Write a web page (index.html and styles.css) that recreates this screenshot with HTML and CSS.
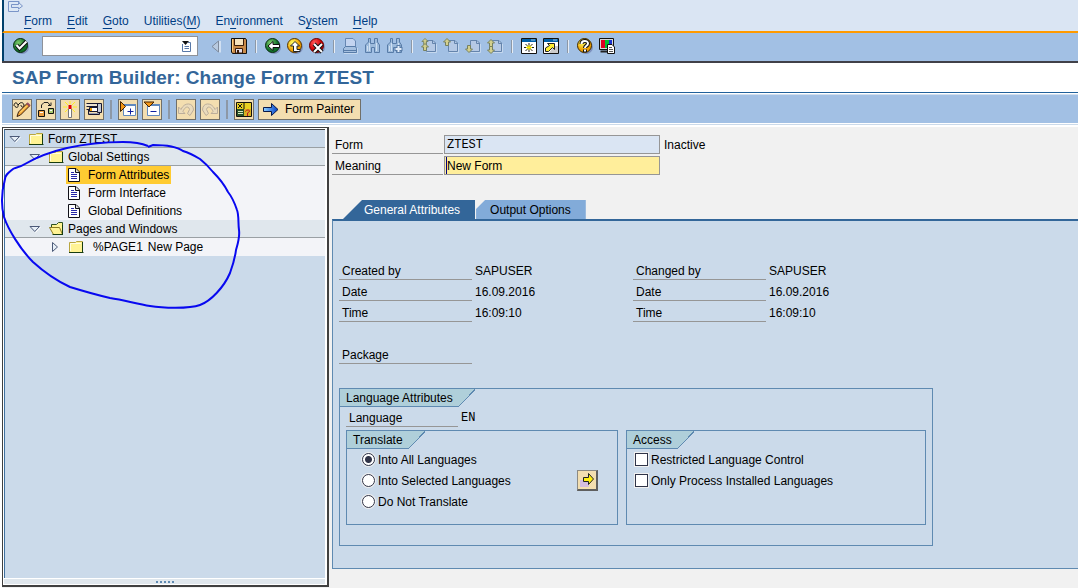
FILE: index.html
```html
<!DOCTYPE html>
<html lang="en">
<head>
    <meta charset="utf-8">
    <title>SAP Form Builder: Change Form ZTEST</title>
    <link rel="stylesheet" href="styles.css">
</head>
<body>
    <!-- shared icon shapes -->
    <svg class="defs" width="0" height="0">
        <defs>
            <radialGradient id="green" cx="35%" cy="30%"><stop offset="0" stop-color="#7ecb6a"/><stop offset="1" stop-color="#11702a"/></radialGradient>
            <radialGradient id="yellow" cx="35%" cy="30%"><stop offset="0" stop-color="#ffff66"/><stop offset="1" stop-color="#f0a000"/></radialGradient>
            <radialGradient id="red" cx="35%" cy="30%"><stop offset="0" stop-color="#ff5a5a"/><stop offset="1" stop-color="#d00000"/></radialGradient>
            <linearGradient id="blue"><stop offset="0" stop-color="#8fd0ff"/><stop offset="1" stop-color="#0040c8"/></linearGradient>
        </defs>
        <symbol id="folder" viewBox="0 0 16 14">
            <path d="M.500 12.500V2.500H6.500L7.500 1.500H13.500V12.500Z" fill="#fff394" stroke="#b8a540"/>
            <path d="M0 12.500H14.500M13.500 2V13" stroke="#173c10" fill="none"/>
            <path d="M1.500 11V3.500H12" stroke="#fffde0" fill="none"/>
        </symbol>
        <symbol id="folder-open" viewBox="0 0 16 14">
            <path d="M2.500 5V2.500H7.500L9.500.500H13.500V12.500H3.500" fill="#fff394" stroke="#2d5020"/>
            <path d="M.500 5.500H10.500L13.500 12.500H4.500Z" fill="#fff394" stroke="#8c7c20"/>
            <path d="M4 12.500H14M13.500 3V13" stroke="#173c10" fill="none"/>
        </symbol>
        <symbol id="doc" viewBox="0 0 12 14">
            <path d="M.500.500H8L11.500 4V13.500H.500Z" fill="#fff" stroke="#101018"/>
            <path d="M7.500 1V4.500H11" fill="#ddd" stroke="#101018"/>
            <path d="M3 4.500H6M3 6.500H9M3 8.500H9M3 10.500H9" stroke="#2828a8"/>
        </symbol>
        <symbol id="down" viewBox="0 0 12 8">
            <path d="M1 1.500H10.500L5.800 6.500Z" fill="#e8f0f8" stroke="#4c5a78"/>
            <path d="M6.500 7.500L11.500 2" stroke="#fff"/>
        </symbol>
        <symbol id="page" viewBox="0 0 16 16">
            <path d="M5.500 2.500H12L14.500 5V13.500H5.500Z" fill="#b5c9e5" stroke="#6484ac"/>
            <path d="M11.500 3V5.500H14" fill="none" stroke="#6484ac"/>
            <path d="M6 14.500H15.500V6" fill="none" stroke="#c5d8ee"/>
        </symbol>
        <symbol id="arrow-up" viewBox="0 0 8 8">
            <path d="M4 .500L7.500 4H5.500V7.500H2.500V4H.500Z" fill="#d3cf8c" stroke="#77815f"/>
        </symbol>
        <symbol id="binoculars" viewBox="0 0 16 16">
            <path d="M3.500 .500H5.500V5.500H9.500V.500H12.500V4L14.500 7V14.500H9.500V9.500H6.500V14.500H.500V7L3.500 4Z" fill="#9dbbdc" stroke="#587ca8"/>
            <path d="M4.500 5V13M2.500 8V13M11.500 5V13" stroke="#cfe0f2"/>
        </symbol>
    </svg>

    <header class="window-head">
        <svg class="window-icon" width="16" height="11" viewBox="0 0 16 11"><path d="M11 2.500V.500H.500V10.500H10.500V9M3.500 3.500H10.500V1.500L14.500 5L10.500 8V6.500H3.500Z" fill="#dde8f5" stroke="#7a95c8"/></svg>
        <nav class="menu">
            <a href="#"><u>F</u>orm</a>
            <a href="#"><u>E</u>dit</a>
            <a href="#"><u>G</u>oto</a>
            <a href="#">Utilities(<u>M</u>)</a>
            <a href="#">En<u>v</u>ironment</a>
            <a href="#">S<u>y</u>stem</a>
            <a href="#"><u>H</u>elp</a>
        </nav>
    </header>

    <div class="toolbar">
        <button class="icon enter" aria-label="Enter"><svg width="16" height="16" viewBox="0 0 16 16"><circle cx="9" cy="9" r="7" fill="#7d91bd"/><circle cx="7.500" cy="7.500" r="7" fill="url(#green)" stroke="#0a2c10"/><path d="M3.500 7L6.500 10.500L13.500 3.500" stroke="#111" stroke-width="4" fill="none"/><path d="M3.500 7L6.500 10.500L13.500 3.500" stroke="#fff" stroke-width="2" fill="none"/></svg></button>
        <div class="command">
            <input type="text" aria-label="Command">
            <button class="icon" aria-label="Command list"><svg width="10" height="11" viewBox="0 0 10 11"><path d="M.500 3V10.500H8.500V1.500H6" fill="none" stroke="#5878a8"/><path d="M2.500 5.500H7M2.500 7.500H7" stroke="#5878a8"/><path d="M0 0H7L3.500 4Z" fill="#111"/></svg></button>
        </div>
        <button class="icon collapse" aria-label="Hide command field"><svg width="10" height="13" viewBox="0 0 10 13"><path d="M7.500 1V12L1 6.500Z" fill="#b8cae0" stroke="#7e8a9c"/><path d="M9 1V12.500" stroke="#fff"/></svg></button>
        <button class="icon" aria-label="Save"><svg width="16" height="16" viewBox="0 0 16 16"><path d="M.500.500H14.500L15.500 2V15.500H1.500L.500 14Z" fill="#c98a48" stroke="#111"/><path d="M1.500 1V13.500" stroke="#ffd080"/><path d="M4 1H12V7H4Z" fill="#f7e3bd"/><path d="M3.500 1V7.500H12.500V1" fill="none" stroke="#3a1c08"/><path d="M4.500 15V10.500H11.500V15Z" fill="#e4dce9" stroke="#3a1c08"/><path d="M6 12H8V15H6Z" fill="#3a1c08"/></svg></button>
        <span class="sep"></span>
        <button class="icon" aria-label="Back"><svg width="16" height="16" viewBox="0 0 16 16"><circle cx="9" cy="9" r="7" fill="#7d91bd"/><circle cx="7.500" cy="7.500" r="7" fill="url(#green)" stroke="#0a2c10"/><path d="M3 8L8 3.500V6.500H14.500V9.500H8V12.500Z" fill="#fff" stroke="#111"/></svg></button>
        <button class="icon" aria-label="Exit"><svg width="16" height="16" viewBox="0 0 16 16"><circle cx="9" cy="9" r="7" fill="#7d91bd"/><circle cx="7.500" cy="7.500" r="7" fill="url(#yellow)" stroke="#553300"/><path d="M8 3.500L12.500 8H10V11.500H13V13.500H6.500V8H3.500Z" fill="#fff" stroke="#222"/></svg></button>
        <button class="icon" aria-label="Cancel"><svg width="16" height="16" viewBox="0 0 16 16"><circle cx="9" cy="9" r="7" fill="#7d91bd"/><circle cx="7.500" cy="7.500" r="7" fill="url(#red)" stroke="#600"/><path d="M5 6L13 14M13 6L5 14" stroke="#111" stroke-width="4"/><path d="M5 6L13 14M13 6L5 14" stroke="#fff" stroke-width="2"/></svg></button>
        <span class="sep"></span>
        <button class="icon" aria-label="Print" disabled><svg width="16" height="16" viewBox="0 0 16 16"><path d="M2.500 9V.500H10L12.500 3V9" fill="#c3d4f0" stroke="#6787b2"/><path d="M.500 10.500L2.500 8.500H12.500L13.500 10.500V14.500H.500Z" fill="#a5c0e0" stroke="#587ca8"/><path d="M1 12.500H13" stroke="#587ca8"/><path d="M1 15.500H14.500V10" fill="none" stroke="#c5d8ee"/></svg></button>
        <button class="icon" aria-label="Find" disabled><svg width="16" height="16"><use href="#binoculars"/></svg></button>
        <button class="icon" aria-label="Find next" disabled><svg width="16" height="16" viewBox="0 0 16 16"><use href="#binoculars" width="16" height="16"/><path d="M11.500 7V15M7.500 11H15.500" stroke="#587ca8" stroke-width="4"/><path d="M11.500 8V14M8.500 11H14.500" stroke="#e2ecf8" stroke-width="2"/></svg></button>
        <span class="sep"></span>
        <button class="icon" aria-label="First page" disabled><svg width="16" height="16" viewBox="0 0 16 16"><use href="#page" width="16" height="16"/><use href="#arrow-up" width="8" height="7"/><use href="#arrow-up" y="5" width="8" height="8"/></svg></button>
        <button class="icon" aria-label="Previous page" disabled><svg width="16" height="16" viewBox="0 0 16 16"><use href="#page" width="16" height="16"/><use href="#arrow-up" width="8" height="8"/></svg></button>
        <button class="icon" aria-label="Next page" disabled><svg width="16" height="16" viewBox="0 0 16 16"><use href="#page" width="16" height="16"/><use href="#arrow-up" transform="translate(0 15) scale(1 -1)" width="8" height="8"/></svg></button>
        <button class="icon" aria-label="Last page" disabled><svg width="16" height="16" viewBox="0 0 16 16"><use href="#page" width="16" height="16"/><use href="#arrow-up" y="1" width="8" height="8"/><use href="#arrow-up" transform="translate(0 16) scale(1 -1)" width="8" height="8"/></svg></button>
        <span class="sep"></span>
        <button class="icon" aria-label="New session"><svg width="16" height="16" viewBox="0 0 16 16"><path d="M.500.500H15.500V15.500H.500Z" fill="#fff" stroke="#111"/><path d="M1 1H15V4H1Z" fill="#0060a8"/><path d="M10 2H14" stroke="#9cc8e8"/><path d="M8 5V14M3 9.500H13M4.500 6L11.500 13M11.500 6L4.500 13" stroke="#222"/><path d="M8 7V12M5 9.500H11M6 7.500L10 11.500M10 7.500L6 11.500" stroke="#ffee00"/></svg></button>
        <button class="icon" aria-label="Create shortcut"><svg width="16" height="16" viewBox="0 0 16 16"><path d="M.500.500H15.500V15.500H.500Z" fill="#fff" stroke="#111"/><path d="M1 1H15V4H1Z" fill="#0060a8"/><path d="M10 2H14" stroke="#9cc8e8"/><path d="M11 8H15V15H6Z" fill="#ccc"/><path d="M2.500 13.500V10L6.500 7.500L4.500 5.500H11.500V11.500L9.500 9.500L5.500 13.500Z" fill="#ffee33" stroke="#222"/></svg></button>
        <span class="sep"></span>
        <button class="icon" aria-label="Help"><svg width="16" height="16" viewBox="0 0 16 16"><circle cx="9" cy="9" r="7" fill="#7d91bd"/><circle cx="7.500" cy="7.500" r="7" fill="url(#yellow)" stroke="#3c2800"/><path d="M4.500 6C4.500 2 11 2 11 5.500C11 8 8 7.500 8 10M8 11.500V14" fill="none" stroke="#111" stroke-width="4"/><path d="M4.500 6C4.500 2 11 2 11 5.500C11 8 8 7.500 8 10M8 11.500V13.500" fill="none" stroke="#fff" stroke-width="2"/></svg></button>
        <button class="icon" aria-label="Customize layout"><svg width="16" height="16" viewBox="0 0 16 16"><path d="M.500.500H14.500V11.500H.500Z" fill="#d8d8d8" stroke="#111"/><path d="M2 2H6V10H2Z" fill="#e00020"/><path d="M6 2H10V10H6Z" fill="#00c030"/><path d="M10 2H13V10H10Z" fill="#1830d0"/><path d="M1.500 13.500H8" stroke="#222" stroke-width="2"/><path d="M8.500 6.500H13L15.500 9V15.500H8.500Z" fill="#fff" stroke="#111"/><path d="M10 9.500H13M10 11.500H14M10 13.500H14" stroke="#555"/></svg></button>
    </div>

    <h1 class="title">SAP Form Builder: Change Form ZTEST</h1>

    <div class="app-toolbar">
        <button aria-label="Display / change"><svg width="18" height="17" viewBox="0 0 18 17"><path d="M1 5C1 1 4 1 5 4S2 7 2 5M5 4L7 2C9 1 11 2 11 5C10 7 8 6 8 4" fill="none" stroke="#111"/><path d="M14 2.500L16.500 5L7.500 14L4 15.500L5.500 11Z" fill="#f5a838" stroke="#3c2010"/><path d="M13.500 5L7 11.500" stroke="#ffe890"/><path d="M14 2L17 5" stroke="#9a4a60" stroke-width="2"/></svg></button>
        <button aria-label="Other object"><svg width="18" height="17" viewBox="0 0 18 17"><path d="M4.500 7V4L7 1.500H11L13.500 5M11 4.500H14V1.500" fill="none" stroke="#222"/><path d="M1.500 9.500H7.500V15.500H1.500Z" fill="#f0a040" stroke="#111"/><path d="M11.500 7.500H16.500V12.500H11.500Z" fill="#a8c870" stroke="#111"/><path d="M3 11.500H6M13 9.500H15" stroke="#fff"/></svg></button>
        <button aria-label="Activate"><svg width="18" height="17" viewBox="0 0 18 17"><path d="M9 0V3M4 1L7 4M14 1L11 4M2 6H6M12 6H16M4 11L7 8M14 11L11 8" stroke="#ffee20"/><path d="M7.500 4H10.500V8H7.500Z" fill="#e00000"/><path d="M8 8H10V16H8Z" fill="#fff"/><path d="M7.500 8V16.500H10.500V8" fill="none" stroke="#77777a"/></svg></button>
        <button aria-label="Test"><svg width="18" height="17" viewBox="0 0 18 17"><path d="M1.500 2.500H16.500V11.500H12.500V2.500M1.500 5.500H12" fill="#c5cad5" stroke="#181830"/><path d="M1 4H12" stroke="#e8e8f0"/><path d="M4.500 6.500H12.500V10.500H4.500Z" fill="#fff" stroke="#181830"/><path d="M5 7H7V10H5Z" fill="#f4a000"/><path d="M1.500 8.500H4.500M3.500 9V13.500H14.500V11.500" fill="none" stroke="#181830"/><path d="M4 12.500H14" stroke="#9aa0b0"/></svg></button>
        <span class="sep"></span>
        <button aria-label="Expand subtree"><svg width="18" height="17" viewBox="0 0 18 17"><path d="M4.500 3.500H16.500V14.500H4.500Z" fill="#fff" stroke="#6089be"/><path d="M4 4H17" stroke="#6089be" stroke-width="2"/><path d="M8.500 10.500H14.500M11.500 7.500V13.500" stroke="#1020a0"/><path d="M1.500.500V10.500L6.500 5.500Z" fill="#f49818" stroke="#442200"/></svg></button>
        <button aria-label="Collapse subtree"><svg width="18" height="17" viewBox="0 0 18 17"><path d="M4.500 3.500H16.500V14.500H4.500Z" fill="#fff" stroke="#6089be"/><path d="M4 4H17" stroke="#6089be" stroke-width="2"/><path d="M7.500 10.500H13.500" stroke="#1020a0"/><path d="M1 1H11L6 6Z" fill="#f49818" stroke="#442200"/></svg></button>
        <span class="sep"></span>
        <button aria-label="Undo" disabled><svg width="18" height="17" viewBox="0 0 18 17"><path d="M1.500 6V12.500H8L6 10.500C8 5 12 5 12.500 8.500L10.500 12.500L13 14.500L16.500 9C16.500 1 7 1 4 8.500Z" fill="#eadbbc" stroke="#bcae9b"/></svg></button>
        <button aria-label="Redo" disabled><svg width="18" height="17" viewBox="0 0 18 17"><path d="M16.500 6V12.500H10L12 10.500C10 5 6 5 5.500 8.500L7.500 12.500L5 14.500L1.500 9C1.500 1 11 1 14 8.500Z" fill="#eadbbc" stroke="#bcae9b"/></svg></button>
        <span class="sep"></span>
        <button aria-label="Field list"><svg width="18" height="17" viewBox="0 0 18 17"><path d="M1.500 1.500H16.500V15.500H1.500Z" fill="#e8d020" stroke="#111"/><path d="M2 8H9V15H2Z" fill="#285028"/><path d="M9 8H16V15H9Z" fill="#d8b020"/><path d="M3 3L7 7M7 3L3 7M9 2V8" stroke="#111"/><path d="M3 10.500H8M3 12.500H8" stroke="#d8e8c0"/><path d="M10.500 10.500C11 8.500 15 8.500 14.500 10.500L12.500 12V15" fill="none" stroke="#c01020"/></svg></button>
        <button class="painter"><svg width="16" height="15" viewBox="0 0 16 15"><path d="M.500 5.500H8.500V1.500L15 7.500L8.500 13.500V9.500H.500Z" fill="url(#blue)" stroke="#081848"/></svg>Form Painter</button>
    </div>

    <main class="workspace">
        <aside class="tree-panel">
            <div class="tree">
                <div class="row root"><button class="icon" aria-label="Collapse"><svg width="12" height="8"><use href="#down"/></svg></button><svg width="16" height="14"><use href="#folder"/></svg><span>Form ZTEST</span></div>
                <div class="row group"><button class="icon" aria-label="Collapse"><svg width="12" height="8"><use href="#down"/></svg></button><svg width="16" height="14"><use href="#folder"/></svg><span>Global Settings</span></div>
                <div class="row leaf"><a href="#" class="selected"><svg width="12" height="14"><use href="#doc"/></svg>Form Attributes</a></div>
                <div class="row leaf"><a href="#"><svg width="12" height="14"><use href="#doc"/></svg>Form Interface</a></div>
                <div class="row leaf"><a href="#"><svg width="12" height="14"><use href="#doc"/></svg>Global Definitions</a></div>
                <div class="row group"><button class="icon" aria-label="Collapse"><svg width="12" height="8"><use href="#down"/></svg></button><svg width="16" height="14"><use href="#folder-open"/></svg><span>Pages and Windows</span></div>
                <div class="row page"><button class="icon" aria-label="Expand"><svg width="12" height="10" viewBox="0 0 12 10"><path d="M3.500.500V9.500L8.500 5Z" fill="#e8f0f8" stroke="#4c5a78"/></svg></button><svg width="16" height="14"><use href="#folder"/></svg><span class="name">%PAGE1</span><span>New Page</span></div>
            </div>
            <div class="grip"><i></i><i></i><i></i><i></i><i></i></div>
            <!-- hand-drawn marker -->
            <svg class="marker" width="244" height="172" viewBox="0 138 244 172"><path d="M148 146C141 143 133 142 123 142C105 142 85 144 67 148C50 152 35 158 25 164C19 168 13 168 13 169C8 173 5 175 5 179C2 190 1 205 4 217C8 229 20 249 33 262C44 272 57 281 70 287C83 291 97 295 110 298C124 300 137 304 150 306C162 308 189 309 200 305C211 301 224 287 230 273C234 262 235 258 236 250C238 243 240 237 239 230C238 223 239 215 237 210C235 204 232 197 228 192C224 184 218 177 213 172C209 167 205 163 200 159C195 156 190 153 183 151C176 146 166 145 153 145L148 147" fill="none" stroke="#0808f0" stroke-width="2"/></svg>
        </aside>

        <section class="detail">
            <div class="form-head">
                <label for="formName">Form</label>
                <input id="formName" class="mono" type="text" value="ZTEST" readonly>
                <span>Inactive</span>
                <label for="meaning">Meaning</label>
                <input id="meaning" class="active" type="text" value="New Form">
            </div>

            <div class="tabs">
                <button class="tab current">General Attributes</button>
                <button class="tab">Output Options</button>
            </div>

            <div class="panel">
                <div class="info">
                    <dl>
                        <dt>Created by</dt><dd>SAPUSER</dd>
                        <dt>Date</dt><dd>16.09.2016</dd>
                        <dt>Time</dt><dd>16:09:10</dd>
                    </dl>
                    <dl>
                        <dt>Changed by</dt><dd>SAPUSER</dd>
                        <dt>Date</dt><dd>16.09.2016</dd>
                        <dt>Time</dt><dd>16:09:10</dd>
                    </dl>
                    <dl class="package">
                        <dt>Package</dt><dd></dd>
                    </dl>
                </div>

                <fieldset class="language">
                    <legend>Language Attributes</legend>
                    <dl class="lang-row">
                        <dt>Language</dt><dd class="mono">EN</dd>
                    </dl>
                    <div class="groups">
                        <fieldset>
                            <legend>Translate</legend>
                            <div class="translate">
                                <div>
                                    <label><input type="radio" name="translate" checked>Into All Languages</label>
                                    <label><input type="radio" name="translate">Into Selected Languages</label>
                                    <label><input type="radio" name="translate">Do Not Translate</label>
                                </div>
                                <button class="select-languages" aria-label="Select languages"><svg width="16" height="16" viewBox="0 0 16 16"><path d="M1 8H10V15H1Z" fill="#d4bde0"/><path d="M4.500 5.500H9.500V1.500L14.500 7L9.500 12.500V9.500H4.500Z" fill="#ffee10" stroke="#222"/></svg></button>
                            </div>
                        </fieldset>
                        <fieldset>
                            <legend>Access</legend>
                            <div class="access">
                                <label><input type="checkbox">Restricted Language Control</label>
                                <label><input type="checkbox">Only Process Installed Languages</label>
                            </div>
                        </fieldset>
                    </div>
                </fieldset>
            </div>
        </section>
    </main>
</body>
</html>
```

FILE: styles.css
```css
* {
    box-sizing: border-box;
}
body {
    margin: 0;
    min-height: 100vh;
    display: flex;
    flex-direction: column;
    padding-left: 2px;
    background: #fff;
    color: #000;
    font-family: "Liberation Sans", Arial, sans-serif;
    font-size: 12px;
    line-height: 18px;
}
button, input {
    font: inherit;
    color: inherit;
}
button {
    padding: 0;
    border: none;
    background: none;
}
a {
    color: inherit;
    text-decoration: none;
}
svg {
    display: block;
    flex: none;
}
.defs {
    position: absolute;
}
.mono {
    font-family: "Liberation Mono", monospace;
}

/* menu and toolbars */
.window-head {
    height: 33px;
    padding: 1px 4px 0;
    background: #dae5f3;
    border-left: 2px solid #00406c;
    border-bottom: 2px solid #ff9a00;
}
.menu {
    display: flex;
    gap: 15px;
    padding-left: 16px;
    color: #003d84;
}
.menu u {
    text-underline-offset: 3px;
}
.toolbar {
    display: flex;
    align-items: center;
    gap: 6px;
    height: 28px;
    padding: 0 9px 2px;
    background: #a2c0e4;
    border-left: 2px solid #00406c;
}
.icon {
    display: flex;
    align-items: center;
    justify-content: center;
}
.sep {
    width: 2px;
    height: 13px;
    margin: 0 2px;
    background: #8d98a6;
    border-right: 1px solid #e6edf6;
}
.command {
    display: flex;
    align-items: center;
    width: 156px;
    height: 20px;
    margin-left: 7px;
    padding-right: 5px;
    background: #fff;
    border: 1px solid #8e9299;
}
.command input {
    flex: 1;
    min-width: 0;
    border: none;
    background: none;
    outline: none;
}
.collapse {
    margin: 0 4px 0 7px;
}
.title {
    height: 32px;
    margin: 0;
    padding-left: 10px;
    border-top: 2px solid #404048;
    border-bottom: 1px solid #20609a;
    color: #336699;
    font-size: 19px;
    line-height: 29px;
}
.app-toolbar {
    display: flex;
    align-items: center;
    gap: 4px;
    height: 29px;
    margin-top: 1px;
    padding: 0 10px;
    background: #a2c0e4;
    border-top: 1px solid #d0deee;
}
.app-toolbar button {
    display: flex;
    align-items: center;
    justify-content: center;
    width: 20px;
    height: 21px;
    background: #f3deb0;
    border: 1px solid #716f68;
}
.app-toolbar .painter {
    width: auto;
    gap: 6px;
    padding: 0 6px 0 4px;
}
.app-toolbar .sep {
    height: 19px;
    border: none;
}

/* tree */
.workspace {
    flex: 1;
    display: flex;
    gap: 3px;
    margin-top: 1px;
    border-top: 1px solid #cbdaea;
    background: linear-gradient(#fff 0 2px, #f1f1f1 2px);
}
.tree-panel {
    position: relative;
    display: flex;
    flex-direction: column;
    flex: 0 0 327px;
    margin: 2px 0 1px;
    border: 1px solid #404040;
    border-right-width: 2px;
    border-bottom-width: 2px;
    background: #fff;
    padding: 1px 2px 1px 1px;
}
.tree {
    flex: 1;
    background: #cbdaea;
    border-top: 1px solid #404040;
    border-left: 1px solid #40719f;
}
.row {
    display: flex;
    align-items: center;
    gap: 8px;
    height: 18px;
    padding-left: 4px;
    background: #f3f4f8;
}
.row span {
    margin-left: -5px;
}
.root, .group {
    border-bottom: 1px solid #9aa0a4;
}
.root {
    background: #cbdaea;
}
.group {
    padding-left: 24px;
    background: #e0e7ed;
}
.leaf {
    padding-left: 61px;
}
.leaf a {
    display: flex;
    align-items: center;
    gap: 8px;
    padding: 0 2px;
}
.leaf .selected {
    background: #ffcb32;
}
.page {
    padding-left: 44px;
}
.page .name {
    margin: 0 2px 0 0;
}
.grip {
    display: flex;
    justify-content: center;
    align-items: center;
    gap: 2px;
    height: 6px;
    border-top: 1px solid #fff;
    background: #e0e7ed;
}
.grip i {
    width: 2px;
    height: 2px;
    background: #5f8ab1;
}
.marker {
    position: absolute;
    left: -3px;
    top: 10px;
    pointer-events: none;
}

/* detail */
.detail {
    flex: 1;
    min-width: 0;
    display: flex;
    flex-direction: column;
    padding-bottom: 19px;
}
.form-head {
    display: grid;
    grid-template-columns: 111px 216px auto;
    column-gap: 1px;
    row-gap: 2px;
    padding-top: 10px;
}
.form-head label {
    height: 19px;
    padding: 1px 3px 0;
    border-bottom: 1px solid #969696;
}
.form-head input {
    width: 100%;
    height: 19px;
    padding: 0 2px;
    border: 1px solid #969696;
    background: #dae5f3;
    outline: none;
}
.form-head .active {
    background: linear-gradient(90deg, transparent 1px, #000080 1px 2px, transparent 2px), #ffee9b;
}
.form-head span {
    padding: 1px 3px 0;
}
.tabs {
    display: flex;
    gap: 1px;
    margin-top: 25px;
    padding-left: 11px;
}
.tab {
    height: 19px;
    padding: 0 15px 0 14px;
    background: #82abd9;
    clip-path: polygon(9px 0, 100% 0, 100% 100%, 0 100%, 0 9px);
}
.tab.current {
    padding-left: 21px;
    background: #336699;
    color: #fff;
    clip-path: polygon(19px 0, 100% 0, 100% 100%, 0 100%);
}
.panel {
    flex: 1;
    padding: 41px 6px 22px;
    background: #cbdaea;
    border: 1px solid #5f8ab1;
    border-top: 2px solid #336699;
    border-right: none;
}
.info {
    display: grid;
    grid-template-columns: 294px auto;
    justify-content: start;
    row-gap: 24px;
}
dl {
    display: grid;
    grid-template-columns: 133px auto;
    gap: 3px;
    margin: 0;
}
dt {
    height: 18px;
    padding-left: 3px;
    border-bottom: 1px solid #969696;
}
dd {
    margin: 0;
}
fieldset {
    min-width: 0;
    margin: 0;
    padding: 0;
    border: 1px solid #5f8ab1;
}
/* slanted corner on the right of the group title */
legend {
    float: left;
    height: 18px;
    padding: 0 22px 0 6px;
    background: linear-gradient(to bottom right, #afcfda 49%, #5f8ab1 49% 53%, transparent 53%) right top / 17px 18px no-repeat,
        linear-gradient(#afcfda 17px, #5f8ab1 17px) left top / calc(100% - 17px) 18px no-repeat;
}
.language {
    max-width: 594px;
    margin-top: 24px;
    padding: 0 6px 20px;
}
.language > legend {
    margin-left: -6px;
}
.lang-row {
    clear: both;
    grid-template-columns: 112px auto;
    padding-top: 2px;
}
.groups {
    display: grid;
    grid-template-columns: 272fr 300fr;
    gap: 8px;
    margin-top: 3px;
}
.groups fieldset {
    min-height: 95px;
}
.translate, .access {
    clear: both;
    padding-left: 15px;
}
.translate {
    display: flex;
    align-items: center;
    justify-content: space-between;
    padding-right: 19px;
}
.access {
    padding-left: 8px;
}
.groups label {
    display: flex;
    align-items: center;
    gap: 3px;
    height: 21px;
}
.groups input {
    appearance: none;
    width: 13px;
    height: 13px;
    margin: 0;
    border: 1px solid #303448;
    background: #fff;
    box-shadow: 0 0 0 1px #f0f0f0;
}
.groups input[type="radio"] {
    border-radius: 50%;
}
.groups input[type="radio"]:checked {
    background: radial-gradient(circle, #303448 3px, #fff 4px);
}
.select-languages {
    display: flex;
    align-items: center;
    justify-content: center;
    width: 21px;
    height: 21px;
    background: #f3deb0;
    border: 1px solid #8c8a84;
    border-right: 2px solid #5f5f5f;
    border-bottom: 2px solid #5f5f5f;
}
```
